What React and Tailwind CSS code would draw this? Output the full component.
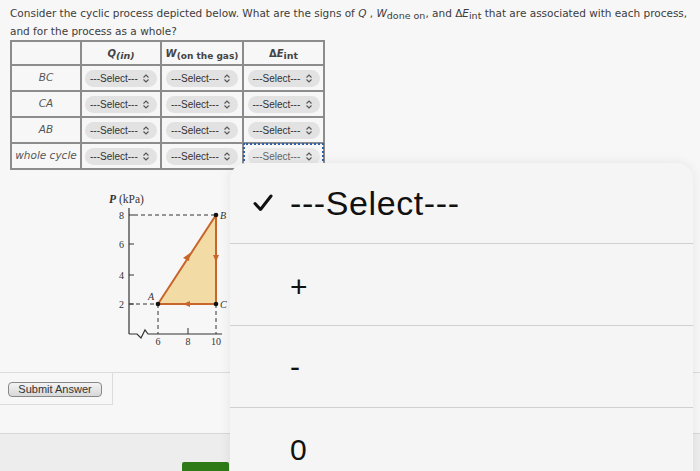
import React from 'react';

const rows = ['BC', 'CA', 'AB', 'whole cycle'];

function UpDown() {
  return (
    <svg width="8" height="9" viewBox="0 0 8 9" className="shrink-0">
      <path d="M1.5 3.5 L4 1 L6.5 3.5 M1.5 5.5 L4 8 L6.5 5.5" fill="none" stroke="#555" strokeWidth="1.1" />
    </svg>
  );
}

function SelectPill({ focused }) {
  return (
    <div
      className={`mx-auto flex h-[17px] w-[72px] items-center justify-between rounded-full pl-[5px] pr-[7px] font-['Liberation_Sans'] text-[10px] ${
        focused ? 'bg-[#e9e9e9] text-[#666]' : 'bg-[#e2e2e2] text-[#333]'
      }`}
    >
      <span>---Select---</span>
      <UpDown />
    </div>
  );
}

function Graph() {
  const dash = { stroke: '#333', strokeWidth: 1, strokeDasharray: '4 3' };
  return (
    <svg width="130" height="160" viewBox="100 190 130 160" className="block">
      <text x="109" y="202" fontFamily="Liberation Serif" fontSize="11.5" fill="#333">
        <tspan fontStyle="italic" fontWeight="bold">P</tspan> (kPa)
      </text>
      <line x1="129" y1="207" x2="129" y2="333" stroke="#333" strokeWidth="1.2" />
      {[214, 243, 274, 303].map((y) => (
        <line key={y} x1="129" y1={y} x2="134" y2={y} stroke="#333" strokeWidth="1" />
      ))}
      {[['8', 214], ['6', 243], ['4', 274], ['2', 303]].map(([t, y]) => (
        <text key={t} x="124" y={y + 3.5} textAnchor="end" fontFamily="Liberation Serif" fontSize="10" fill="#333">{t}</text>
      ))}
      <line x1="134" y1="214" x2="216" y2="214" style={dash} />
      <line x1="129" y1="303" x2="158" y2="303" style={dash} />
      <line x1="158" y1="303" x2="158" y2="333" style={dash} />
      <line x1="216" y1="303" x2="216" y2="333" style={dash} />
      <path d="M129 333 L137 333 L141 337 L145 329 L148 333 L222 333" fill="none" stroke="#333" strokeWidth="1.2" />
      <line x1="188" y1="327" x2="188" y2="333" stroke="#333" strokeWidth="1" />
      {[['6', 158], ['8', 188], ['10', 216]].map(([t, x]) => (
        <text key={t} x={x} y="344" textAnchor="middle" fontFamily="Liberation Serif" fontSize="10" fill="#333">{t}</text>
      ))}
      <polygon points="158,303 216,214 216,303" fill="#f3dba6" stroke="#c8652b" strokeWidth="2" strokeLinejoin="round" />
      {/* arrows */}
      <polygon points="190,252 183,257 189,260" fill="#c8652b" />
      <polygon points="213,254 219,254 216,261" fill="#c8652b" />
      <polygon points="183,303 190,300 190,306" fill="#c8652b" />
      <circle cx="158" cy="303" r="2.3" fill="#111" />
      <circle cx="216" cy="214" r="2.3" fill="#111" />
      <circle cx="216" cy="303" r="2.3" fill="#111" />
      <text x="148" y="299" fontFamily="Liberation Serif" fontStyle="italic" fontSize="10" fill="#333">A</text>
      <text x="220" y="218" fontFamily="Liberation Serif" fontStyle="italic" fontSize="10" fill="#333">B</text>
      <text x="220" y="307" fontFamily="Liberation Serif" fontStyle="italic" fontSize="10" fill="#333">C</text>
    </svg>
  );
}

export default function App() {
  const cell = 'border-2 border-[#8c8c8c]';
  return (
    <div className="relative h-[471px] w-[700px] overflow-hidden bg-[#f7f7f7] font-['DejaVu_Sans',sans-serif]">
      <div className="px-[10px] pt-[4px] text-[10.5px] leading-[18px] text-[#3c3c3c]">
        <p className="whitespace-nowrap">
          Consider the cyclic process depicted below. What are the signs of <i>Q</i> , <i>W</i>
          <sub className="text-[9.5px]">done on</sub>, and Δ<i>E</i>
          <sub className="text-[9.5px]">int</sub> that are associated with each process,
        </p>
        <p>and for the process as a whole?</p>
      </div>

      <table className="ml-[10px] table-fixed border-collapse border-2 border-[#8c8c8c] text-[10.5px] text-[#444]">
        <thead>
          <tr className="h-[24px] whitespace-nowrap text-[10px]">
            <th className={`w-[70px] ${cell}`}></th>
            <th className={`w-[80px] ${cell} font-bold`}>
              <i>Q</i>
              <sub className="text-[9.5px] italic">(in)</sub>
            </th>
            <th className={`w-[82px] ${cell} font-bold`}>
              <i>W</i>
              <sub className="text-[9px]">(on the gas)</sub>
            </th>
            <th className={`w-[81px] ${cell} font-bold`}>
              Δ<i>E</i>
              <sub className="text-[9.5px]">int</sub>
            </th>
          </tr>
        </thead>
        <tbody>
          {rows.map((r, i) => (
            <tr key={r} className="h-[26px]">
              <td className={`${cell} whitespace-nowrap text-center italic text-[#555]`}>{r}</td>
              <td className={cell}><SelectPill /></td>
              <td className={cell}><SelectPill /></td>
              <td className={i === 3 ? `${cell} outline-2 -outline-offset-2 outline-dotted outline-[#2f5fa8]` : cell}>
                <SelectPill focused={i === 3} />
              </td>
            </tr>
          ))}
        </tbody>
      </table>

      <div className="h-[202px] pl-[100px] pt-[21px]">
        <Graph />
      </div>

      <div className="h-[61px] border-t border-[#dcdcdc]">
        <div className="h-[32px] w-[113px] border-r border-b border-[#dcdcdc] pl-[8px] pt-[9px]">
          <button className="flex h-[15px] w-[94px] items-center justify-center rounded-[4px] border border-[#888] bg-gradient-to-b from-[#f4f4f4] to-[#d8d8d8] font-['Liberation_Sans'] text-[11px] leading-none text-[#333]">
            Submit Answer
          </button>
        </div>
      </div>

      <div className="h-[40px] border-t border-[#d8d8d8] bg-[#ededed] pl-[182px] pt-[28px]">
        <div className="h-[12px] w-[47px] rounded-t-[2px] bg-[#2e7a17]"></div>
      </div>

      {/* native select picker */}
      <div className="absolute left-[230px] top-[163px] h-[340px] w-[463px] rounded-[16px] bg-[#f5f5f5] font-['Liberation_Sans'] text-[#111] shadow-[0_0_12px_rgba(0,0,0,0.08)]">
        <div className="flex h-[81px] items-center border-b border-[#d0d0d0] pl-[23px] text-[34px] tracking-[0.6px]">
          <svg width="20" height="18" viewBox="0 0 20 18" className="mr-[17px]">
            <path d="M2 9.5 L7.5 15.5 L18 2" fill="none" stroke="#111" strokeWidth="3" strokeLinecap="round" strokeLinejoin="round" />
          </svg>
          <span>---Select---</span>
        </div>
        <div className="flex h-[82px] items-center border-b border-[#d0d0d0] pl-[60px] pt-[4px] text-[30px]">+</div>
        <div className="flex h-[82px] items-center border-b border-[#d0d0d0] pl-[60px] text-[30px]">-</div>
        <div className="flex h-[82px] items-center pl-[60px] text-[30px]">0</div>
      </div>
    </div>
  );
}
